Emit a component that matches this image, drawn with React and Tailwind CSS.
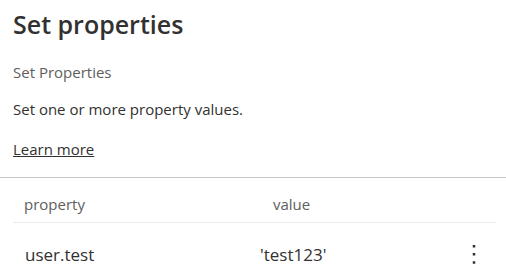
import React from 'react';

const rows = [{ property: 'user.test', value: "'test123'" }];

function KebabIcon() {
  return (
    <svg width="4" height="20" viewBox="0 0 4 20" fill="#323130">
      <rect x="0.75" y="0" width="2.5" height="2.5" />
      <rect x="0.75" y="8" width="2.5" height="2.5" />
      <rect x="0.75" y="16.25" width="2.5" height="2.5" />
    </svg>
  );
}

export default function App() {
  return (
    <div
      className="w-[506px] h-[280px] overflow-hidden bg-white text-[#323130]"
      style={{ fontFamily: '"Open Sans", "Noto Sans", sans-serif' }}
    >
      <div className="px-[13px] pt-[7px]">
        <h1 className="text-[25px] leading-[34px] font-semibold">Set properties</h1>
        <p className="mt-[21px] text-[15px] leading-[20px] text-[#605e5c]">Set Properties</p>
        <p className="mt-[17px] text-[15px] leading-[20px]">Set one or more property values.</p>
        <a href="#" className="mt-[20px] block w-fit text-[15px] leading-[20px] underline">
          Learn more
        </a>
      </div>

      <div className="mt-[18px] border-t border-[#c8c6c4]" />

      <div className="pl-[13px] pr-[10px]">
        <div className="flex h-[45px] items-start border-b border-[#edebe9] pt-[16px] text-[15px] leading-[20px] text-[#605e5c]">
          <div className="w-[248px] pl-[11px]">property</div>
          <div className="flex-1 pl-[12px]">value</div>
        </div>
        {rows.map((r) => (
          <div key={r.property} className="flex h-[57px] items-start pt-[20px] text-[17px] leading-[24px]">
            <div className="w-[247px] pl-[12px]">{r.property}</div>
            <div className="flex-1">{r.value}</div>
            <button className="mr-[20px] mt-[1.5px] flex w-[4px] items-start">
              <KebabIcon />
            </button>
          </div>
        ))}
      </div>
    </div>
  );
}
